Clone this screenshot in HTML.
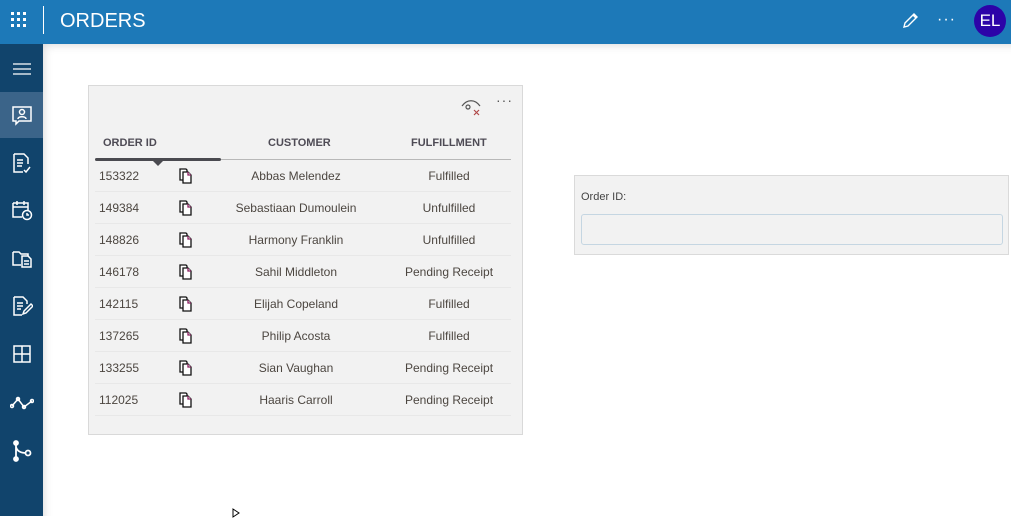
<!DOCTYPE html>
<html><head><style>
*{box-sizing:border-box;margin:0;padding:0}
body{width:1011px;height:516px;overflow:hidden;background:#fff;font-family:"Liberation Sans",sans-serif;position:relative}
.top{position:absolute;left:0;top:0;width:1011px;height:44px;background:#1d79b8}
.side{position:absolute;left:0;top:44px;width:43px;height:472px;background:#11446c}
.main{position:absolute;left:43px;top:44px;right:0;bottom:0;background:#fff;box-shadow:inset 6px 6px 10px -6px rgba(0,0,0,.18)}
.ic{position:absolute;left:0;width:43px;height:46px;display:flex;align-items:center;justify-content:center}
.panel{position:absolute;left:88px;top:85px;width:435px;height:350px;background:#f2f2f2;border:1px solid #d9d9d9}
.row{position:absolute;left:6px;width:416px;height:32px;border-bottom:1px solid #e8e8e8;font-size:12px;color:#4c4640}
.row span{position:absolute;top:9px}
.th{position:absolute;top:51px;font-size:11px;font-weight:bold;color:#4e4b55}
</style></head><body>
<div class="top">
 <svg style="position:absolute;left:11px;top:12px" width="16" height="16" fill="#fff"><g><rect x="0" y="0" width="3" height="3"/><rect x="6" y="0" width="3" height="3"/><rect x="12" y="0" width="3" height="3"/><rect x="0" y="6" width="3" height="3"/><rect x="6" y="6" width="3" height="3"/><rect x="12" y="6" width="3" height="3"/><rect x="0" y="12" width="3" height="3"/><rect x="6" y="12" width="3" height="3"/><rect x="12" y="12" width="3" height="3"/></g></svg>
 <div style="position:absolute;left:43px;top:6px;width:1px;height:28px;background:#fff"></div>
 <div style="position:absolute;left:60px;top:10px;color:#fff;font-size:20px">ORDERS</div>
 <svg style="position:absolute;left:902px;top:11px" width="16" height="18" fill="none" stroke="#fff" stroke-width="1.4"><path d="M2 16l1-4 9-9 3 3-9 9z M11 4l3 3"/></svg>
 <div style="position:absolute;left:937px;top:11px;color:#fff;font-size:16px;letter-spacing:1px">···</div>
 <div style="position:absolute;left:974px;top:5px;width:32px;height:32px;border-radius:50%;background:#2c03a8;color:#fff;font-size:17px;text-align:center;line-height:32px">EL</div>
</div>
<div class="side">
 <div class="ic" style="top:2px"><svg width="18" height="12" stroke="#fff" stroke-width="1.2"><path d="M0 1h18M0 6h18M0 11h18"/></svg></div>
 <div class="ic" style="top:48px;background:#3b6489"><svg width="22" height="22" fill="none" stroke="#fff" stroke-width="1.5"><path d="M2 3h18v14H8l-3 3v-3H2z"/><circle cx="11" cy="8" r="2.5"/><path d="M7 15c0-3 8-3 8 0"/></svg></div>
 <div class="ic" style="top:96px"><svg width="22" height="22" fill="none" stroke="#fff" stroke-width="1.5"><path d="M3 2h10l4 4v6M3 2v18h9"/><path d="M6 8h6M6 11h6M6 14h5"/><path d="M13 18l2 2 4-5"/></svg></div>
 <div class="ic" style="top:143px"><svg width="22" height="22" fill="none" stroke="#fff" stroke-width="1.5"><path d="M2 4h15v7M2 4v14h9M2 8h15M6 2v4M13 2v4"/><circle cx="16" cy="16" r="4.5"/><path d="M16 14v2h2"/></svg></div>
 <div class="ic" style="top:191px"><svg width="22" height="22" fill="none" stroke="#fff" stroke-width="1.5"><path d="M2 5h6l2 2h7v2M2 5v13h8"/><path d="M11 9h6l3 3v8h-9z M13 14h5M13 17h5"/></svg></div>
 <div class="ic" style="top:239px"><svg width="22" height="22" fill="none" stroke="#fff" stroke-width="1.5"><path d="M3 2h9l4 4v3M3 2v18h8M6 8h6M6 11h6M6 14h4"/><path d="M12 19l1-3 7-7 2 2-7 7z"/></svg></div>
 <div class="ic" style="top:287px"><svg width="20" height="20" fill="none" stroke="#fff" stroke-width="1.5"><rect x="2" y="2" width="16" height="16"/><path d="M10 2v16M2 10h16"/></svg></div>
 <div class="ic" style="top:336px"><svg width="24" height="14" fill="none" stroke="#fff" stroke-width="1.5"><path d="M2 10l6-7 6 8 8-6"/><circle cx="2" cy="10" r="1.5"/><circle cx="8" cy="3" r="1.5"/><circle cx="14" cy="11" r="1.5"/><circle cx="22" cy="5" r="1.5"/></svg></div>
 <div class="ic" style="top:384px"><svg width="22" height="24" fill="none" stroke="#fff" stroke-width="1.8"><circle cx="5" cy="4" r="2" fill="#fff"/><circle cx="5" cy="20" r="2" fill="#fff"/><circle cx="17" cy="14" r="2.5"/><path d="M5 4v16M5 8c1 4 5 6 10 6"/></svg></div>
</div>
<div class="main"></div>
<div class="panel">
 <svg style="position:absolute;left:371px;top:11px" width="22" height="22" fill="none" stroke-width="1.2"><path d="M2 9c5-7 13-7 18 0" stroke="#555"/><circle cx="8" cy="10" r="2" stroke="#555"/><path d="M14 13l5 5M19 13l-5 5" stroke="#b04848"/></svg>
 <div style="position:absolute;left:407px;top:6px;font-size:14px;color:#555;letter-spacing:1px">···</div>
 <div class="th" style="left:14px">ORDER ID</div>
 <div class="th" style="left:179px">CUSTOMER</div>
 <div class="th" style="left:322px">FULFILLMENT</div>
 <div style="position:absolute;left:6px;top:73px;width:416px;height:1px;background:#b8b8b8"></div>
 <div style="position:absolute;left:6px;top:72px;width:126px;height:3px;background:#4a4a50;border-radius:2px"></div>
 <div style="position:absolute;left:64px;top:75px;border-left:5px solid transparent;border-right:5px solid transparent;border-top:5px solid #4a4a50"></div>
 <div id="rows"></div>
</div>
<div style="position:absolute;left:574px;top:175px;width:435px;height:80px;background:#f2f2f2;border:1px solid #dadada">
 <div style="position:absolute;left:6px;top:15px;font-size:11px;color:#444">Order ID:</div>
 <div style="position:absolute;left:6px;top:38px;width:422px;height:31px;border:1px solid #c5d6e2;border-radius:3px"></div>
</div>
<svg style="position:absolute;left:232px;top:508px" width="10" height="10"><path d="M1 1v8l6-4z" fill="#fff" stroke="#000"/></svg>
<script>
var d=[["153322","Abbas Melendez","Fulfilled"],["149384","Sebastiaan Dumoulein","Unfulfilled"],["148826","Harmony Franklin","Unfulfilled"],["146178","Sahil Middleton","Pending Receipt"],["142115","Elijah Copeland","Fulfilled"],["137265","Philip Acosta","Fulfilled"],["133255","Sian Vaughan","Pending Receipt"],["112025","Haaris Carroll","Pending Receipt"]];
var h="";d.forEach(function(r,i){h+='<div class="row" style="top:'+(74+i*32)+'px"><span style="left:4px">'+r[0]+'</span><svg style="position:absolute;left:84px;top:8px" width="14" height="16" fill="#fff" stroke="#111" stroke-width="1.3"><path d="M1 1h6l1 1v10H1z"/><path d="M4 4h5l3 3v8H4z"/><path d="M9 4v3h3" stroke="#8a2060"/></svg><span style="left:110px;width:182px;text-align:center">'+r[1]+'</span><span style="left:292px;width:124px;text-align:center">'+r[2]+'</span></div>'});
document.getElementById("rows").innerHTML=h;
</script>
</body></html>
